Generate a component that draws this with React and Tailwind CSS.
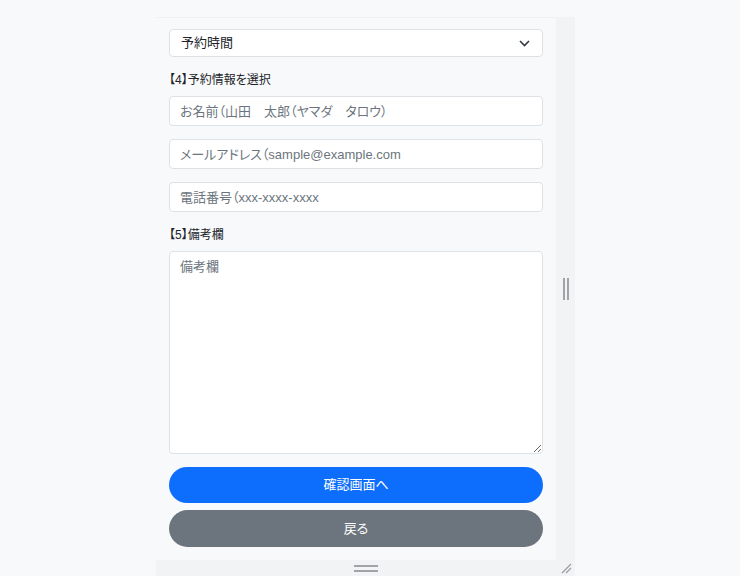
import React from "react";

export default function App() {
  const font = { fontFamily: '"Liberation Sans", "Noto Sans CJK JP", sans-serif' };
  const inputCls =
    "h-[30px] bg-white border border-[#dee2e6] rounded-[4px] px-[10px] text-[13px] text-[#212529] placeholder:text-[#6c757d] outline-none [font-feature-settings:'palt']";
  return (
    <div className="min-h-screen w-full bg-[#f8f9fa] pt-[17px] [font-feature-settings:'palt']" style={font}>
      <div className="ml-[156px] w-[419px] bg-[#f1f3f5] flex flex-col">
        <div className="flex">
          <div className="w-[400px] h-[543px] bg-[#f8f9fa] border-t border-[#eef0f2] px-[13px] pt-[11px] pb-[13px] flex flex-col">
            <div className="h-[28px] bg-white border border-[#dee2e6] rounded-[4px] flex items-center justify-between pl-[11px] pr-[12px] text-[13px] text-[#212529]">
              <span>予約時間</span>
              <svg width="11" height="7" viewBox="0 0 11 7" fill="none">
                <path d="M1 1l4.5 4.5L10 1" stroke="#343a40" strokeWidth="1.6" />
              </svg>
            </div>
            <div className="mt-[14px] h-[18px] text-[12px] leading-[18px] text-[#212529]">
              【4】予約情報を選択
            </div>
            <input className={"mt-[7px] " + inputCls} placeholder="お名前（山田　太郎（ヤマダ　タロウ）" />
            <input className={"mt-[13px] " + inputCls} placeholder="メールアドレス（sample@example.com" />
            <input className={"mt-[13px] " + inputCls} placeholder="電話番号（xxx-xxxx-xxxx" />
            <div className="mt-[14px] h-[18px] text-[12px] leading-[18px] text-[#212529]">
              【5】備考欄
            </div>
            <textarea
              className="mt-[7px] h-[203px] bg-white border border-[#dee2e6] rounded-[4px] px-[10px] py-[5px] text-[13px] text-[#212529] placeholder:text-[#6c757d] outline-none [font-feature-settings:'palt']"
              placeholder="備考欄"
            />
            <button className="mt-[13px] h-[36px] rounded-full bg-[#0d6efd] text-white text-[13px] [font-feature-settings:'palt']">
              確認画面へ
            </button>
            <button className="mt-[7px] h-[37px] rounded-full bg-[#6c757d] text-white text-[13px] [font-feature-settings:'palt']">
              戻る
            </button>
          </div>
          <div className="w-[19px] flex items-center justify-center">
            <div className="flex gap-[2px]">
              <div className="w-[2px] h-[22px] bg-[#a0a4a8]" />
              <div className="w-[2px] h-[22px] bg-[#a0a4a8]" />
            </div>
          </div>
        </div>
        <div className="h-[16px] flex items-center justify-between">
          <div className="w-[19px]" />
          <div className="flex flex-col gap-[3px]">
            <div className="w-[24px] h-[2px] bg-[#a0a4a8]" />
            <div className="w-[24px] h-[2px] bg-[#a0a4a8]" />
          </div>
          <div className="w-[19px] flex items-center justify-center">
            <svg width="12" height="12" viewBox="0 0 12 12">
              <path d="M2 11L11 2M6 11L11 6" stroke="#9a9ea3" strokeWidth="1.2" />
            </svg>
          </div>
        </div>
      </div>
    </div>
  );
}
